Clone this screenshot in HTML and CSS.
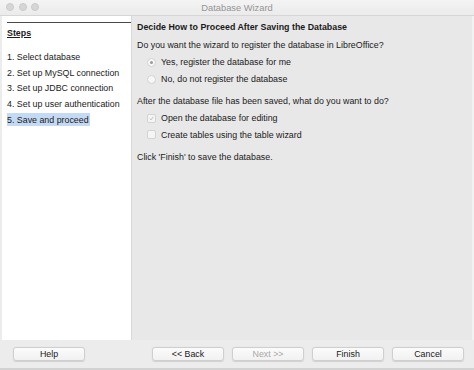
FILE: index.html
```html
<!DOCTYPE html>
<html>
<head>
<meta charset="utf-8">
<link rel="stylesheet" href="styles.css">
</head>
<body>
<div class="window">
  <div class="titlebar">
    <div class="lights"><span class="light"></span><span class="light"></span><span class="light"></span></div>
    <div class="title">Database Wizard</div>
  </div>
  <div class="main">
    <div class="steps">
      <div class="rule"></div>
      <div class="steps-title">Steps</div>
      <ul class="step-list">
        <li>1. Select database</li>
        <li>2. Set up MySQL connection</li>
        <li>3. Set up JDBC connection</li>
        <li>4. Set up user authentication</li>
        <li><span class="current">5. Save and proceed</span></li>
      </ul>
    </div>
    <div class="content">
      <div class="heading">Decide How to Proceed After Saving the Database</div>
      <div class="para q1">Do you want the wizard to register the database in LibreOffice?</div>
      <div class="option"><span class="radio checked"></span><span>Yes, register the database for me</span></div>
      <div class="option"><span class="radio"></span><span>No, do not register the database</span></div>
      <div class="para q2">After the database file has been saved, what do you want to do?</div>
      <div class="option"><span class="check checked"><svg viewBox="0 0 10 10" width="9" height="9"><path d="M2.6 5.2 L4.3 7 L7.4 2.6" fill="none" stroke="#a6a6a6" stroke-width="1"/></svg></span><span>Open the database for editing</span></div>
      <div class="option second"><span class="check"></span><span>Create tables using the table wizard</span></div>
      <div class="para q3">Click 'Finish' to save the database.</div>
    </div>
  </div>
  <div class="buttons">
    <button class="btn">Help</button>
    <div class="spacer"></div>
    <button class="btn">&lt;&lt; Back</button>
    <button class="btn disabled">Next &gt;&gt;</button>
    <button class="btn">Finish</button>
    <button class="btn">Cancel</button>
  </div>
</div>
</body>
</html>
```
FILE: styles.css
```css
html, body {
  margin: 0;
  padding: 0;
  background: #e4e4e4;
}
body {
  font-family: "Liberation Sans", Arial, Helvetica, sans-serif;
  font-size: 8.85px;
  color: #1a1a1a;
}
.window {
  width: 474px;
  height: 370px;
  display: flex;
  flex-direction: column;
  background: #ececec;
  box-sizing: border-box;
  border-bottom: 2px solid #d2d2d2;
}
.titlebar {
  height: 15px;
  flex: none;
  position: relative;
  background: linear-gradient(#f4f4f4, #ebebeb);
  border-bottom: 1px solid #d6d6d6;
  display: flex;
  align-items: center;
  justify-content: center;
}
.lights {
  position: absolute;
  left: 6px;
  top: 3px;
  display: flex;
  gap: 4.5px;
}
.light {
  width: 8px;
  height: 8px;
  border-radius: 50%;
  background: #d6d6d6;
  border: 0.5px solid #cacaca;
  box-sizing: border-box;
}
.title {
  color: #949494;
  font-size: 9.3px;
}
.main {
  flex: 1;
  display: flex;
  min-height: 0;
}
.steps {
  width: 129px;
  margin-left: 2px;
  background: #ffffff;
  padding-top: 6px;
  box-sizing: border-box;
}
.rule {
  margin-left: 5px;
  height: 1px;
  background: #4a4a4a;
}
.steps-title {
  margin-left: 5px;
  margin-top: 4px;
  font-weight: bold;
  text-decoration: underline;
  line-height: 12px;
}
.step-list {
  list-style: none;
  margin: 11px 0 0 0;
  padding: 0 0 0 5px;
  line-height: 15.5px;
}
.current {
  background: #c4daf4;
  padding: 1.5px 1px 1.5px 0;
}
.content {
  flex: 1;
  background: #e8e8e8;
  border-left: 1px solid #d9d9d9;
  border-right: 2px solid #f2f2f2;
  padding: 5px 0 0 5px;
  display: flex;
  flex-direction: column;
}
.heading {
  font-weight: bold;
  line-height: 12px;
}
.para {
  line-height: 12px;
}
.q1 { margin-top: 6px; }
.q2 { margin-top: 10px; }
.q3 { margin-top: 10px; }
.option {
  display: flex;
  align-items: center;
  gap: 5px;
  padding-left: 10px;
  line-height: 12px;
  margin-top: 5px;
}
.option.second { margin-top: 4.5px; }
.radio {
  width: 9px;
  height: 9px;
  border-radius: 50%;
  background: #f7f7f7;
  border: 0.5px solid #d3d3d3;
  box-sizing: border-box;
  display: flex;
  align-items: center;
  justify-content: center;
}
.radio.checked::after {
  content: "";
  width: 3px;
  height: 3px;
  border-radius: 50%;
  background: #9a9a9a;
}
.check {
  width: 9px;
  height: 9px;
  border-radius: 2px;
  background: #f5f5f5;
  border: 0.5px solid #d3d3d3;
  box-sizing: border-box;
  display: flex;
  align-items: center;
  justify-content: center;
}
.check svg { display: block; }
.buttons {
  height: 28px;
  flex: none;
  display: flex;
  align-items: center;
  padding: 0 10px 0 13px;
  gap: 8px;
  box-sizing: border-box;
}
.spacer { flex: 1; }
.btn {
  width: 72px;
  height: 14px;
  padding: 0;
  font-family: inherit;
  font-size: 8.85px;
  color: #1a1a1a;
  background: linear-gradient(#fbfbfb, #f1f1f1);
  border: 0.5px solid #cfcfcf;
  border-radius: 3px;
  box-shadow: 0 0.5px 1px rgba(0,0,0,0.12);
}
.btn.disabled { color: #a8a8a8; }
```
